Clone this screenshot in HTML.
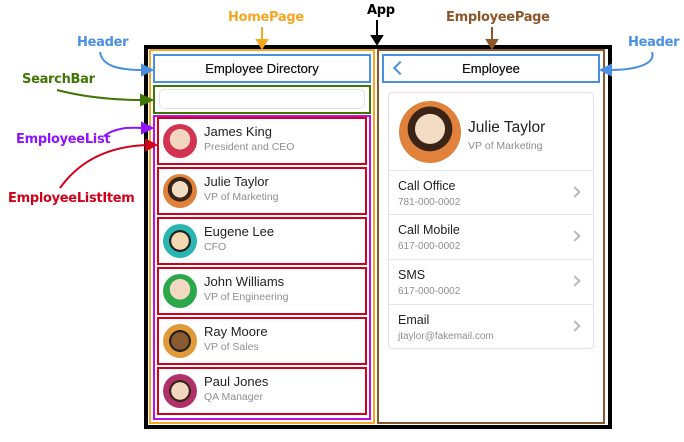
<!DOCTYPE html>
<html><head><meta charset="utf-8"><style>
*{margin:0;padding:0;box-sizing:border-box}
body{width:684px;height:442px;background:#fff;position:relative;overflow:hidden;font-family:"Liberation Sans",sans-serif}
.a{position:absolute}
.lbl{position:absolute;font-family:"DejaVu Sans","Liberation Sans",sans-serif;font-weight:bold;font-size:13px;letter-spacing:-0.3px;white-space:nowrap}
.item{position:absolute;left:157px;width:210px;height:48px;border:2px solid #d0021b;background:#fff}
.av{position:absolute;left:4px;top:5px;width:34px;height:34px;border-radius:50%}
.nm{position:absolute;left:45px;top:5px;font-size:13px;color:#222}
.ti{position:absolute;left:45px;top:22px;font-size:10.5px;color:#8e8e93}
.row{position:absolute;left:0;width:204px;height:44px;border-top:1px solid #e6e6e6}
.row .t{position:absolute;left:9px;top:8px;font-size:12.5px;color:#222}
.row .s{position:absolute;left:9px;top:26px;font-size:10px;color:#8e8e93}
.row .c{position:absolute;right:14px;top:17px;width:8px;height:8px;border-right:2px solid #b8b8b8;border-top:2px solid #b8b8b8;transform:rotate(45deg)}
.hd{text-align:center;line-height:25px;font-size:13px;color:#111;font-weight:bold;-webkit-text-stroke:0}
</style></head><body>
<div class="a" style="left:144px;top:45px;width:468px;height:384px;border:4px solid #000"></div>
<div class="a" style="left:149px;top:49px;width:226px;height:375px;border:2px solid #f5a623"></div>
<div class="a" style="left:377px;top:49px;width:228px;height:375px;border:2px solid #8b572a"></div>
<div class="a hd" style="left:153px;top:54px;width:218px;height:29px;border:2px solid #4a90e2;font-weight:normal;text-shadow:0 0 0.4px #111">Employee Directory</div>
<div class="a" style="left:153px;top:85px;width:218px;height:29px;border:2px solid #417505"></div>
<div class="a" style="left:159px;top:89px;width:206px;height:20px;border:1px solid #e2e2e2;border-radius:5px"></div>
<div class="a" style="left:153px;top:115px;width:218px;height:305px;border:2px solid #bd10e0"></div>
<div class="item" style="top:117px"><div class="av" style="background:radial-gradient(circle at 50% 45%,#f2d6c0 0 40%,#d23350 41%)"></div><div class="nm">James King</div><div class="ti">President and CEO</div></div>
<div class="item" style="top:167px"><div class="av" style="background:radial-gradient(circle at 50% 45%,#f3dcc4 0 32%,#3a2418 33% 48%,#e0823c 49%)"></div><div class="nm">Julie Taylor</div><div class="ti">VP of Marketing</div></div>
<div class="item" style="top:217px"><div class="av" style="background:radial-gradient(circle at 50% 50%,#f1dab0 0 36%,#222 37% 45%,#2bb5b0 46%)"></div><div class="nm">Eugene Lee</div><div class="ti">CFO</div></div>
<div class="item" style="top:267px"><div class="av" style="background:radial-gradient(circle at 50% 45%,#f2d8c0 0 40%,#2aa84a 41%)"></div><div class="nm">John Williams</div><div class="ti">VP of Engineering</div></div>
<div class="item" style="top:317px"><div class="av" style="background:radial-gradient(circle at 50% 50%,#8a5a30 0 36%,#222 37% 45%,#e09a3a 46%)"></div><div class="nm">Ray Moore</div><div class="ti">VP of Sales</div></div>
<div class="item" style="top:367px"><div class="av" style="background:radial-gradient(circle at 50% 50%,#f2d6c0 0 36%,#3a2418 37% 45%,#b0306a 46%)"></div><div class="nm">Paul Jones</div><div class="ti">QA Manager</div></div>
<div class="a hd" style="left:382px;top:54px;width:218px;height:29px;border:2px solid #4a90e2;font-weight:normal;text-shadow:0 0 0.4px #111">Employee</div>
<div class="a" style="left:395px;top:63px;width:10px;height:10px;border-left:2px solid #4a90e2;border-bottom:2px solid #4a90e2;transform:rotate(45deg)"></div>
<div class="a" style="left:388px;top:92px;width:206px;height:257px;border:1px solid #e4e4e4;border-radius:4px;background:#fff">
 <div class="a" style="left:10px;top:8px;width:62px;height:62px;border-radius:50%;background:radial-gradient(circle at 50% 45%,#f3dcc4 0 32%,#3a2418 33% 48%,#e0823c 49%)"></div>
 <div class="a" style="left:79px;top:26px;font-size:15.5px;color:#222">Julie Taylor</div>
 <div class="a" style="left:79px;top:47px;font-size:10.5px;color:#8e8e93">VP of Marketing</div>
 <div class="row" style="top:77px"><div class="t">Call Office</div><div class="s">781-000-0002</div><div class="c"></div></div>
 <div class="row" style="top:121px"><div class="t">Call Mobile</div><div class="s">617-000-0002</div><div class="c"></div></div>
 <div class="row" style="top:166px"><div class="t">SMS</div><div class="s">617-000-0002</div><div class="c"></div></div>
 <div class="row" style="top:211px"><div class="t">Email</div><div class="s">jtaylor@fakemail.com</div><div class="c"></div></div>
</div>
<div class="lbl" style="left:367px;top:3px;color:#000">App</div>
<div class="lbl" style="left:228px;top:10px;color:#f5a623">HomePage</div>
<div class="lbl" style="left:446px;top:10px;color:#8b572a">EmployeePage</div>
<div class="lbl" style="left:77px;top:35px;color:#4a90e2">Header</div>
<div class="lbl" style="left:628px;top:35px;color:#4a90e2">Header</div>
<div class="lbl" style="left:22px;top:72px;color:#417505">SearchBar</div>
<div class="lbl" style="left:16px;top:132px;color:#9013fe">EmployeeList</div>
<div class="lbl" style="left:8px;top:191px;color:#d0021b">EmployeeListItem</div>
<svg class="a" style="left:0;top:0" width="684" height="442">
<g fill="none" stroke-width="2">
<path d="M377 20 V40" stroke="#000"/><path d="M372 36 L377 44 L382 36Z" fill="#000" stroke="#000"/>
<path d="M262 27 V42" stroke="#f5a623"/><path d="M257 40 L262 48 L267 40Z" fill="#f5a623" stroke="#f5a623"/>
<path d="M492 27 V42" stroke="#8b572a"/><path d="M487 40 L492 48 L497 40Z" fill="#8b572a" stroke="#8b572a"/>
<path d="M100 52 C102 66 118 70 144 70" stroke="#4a90e2"/><path d="M142 65 L152 70 L142 75Z" fill="#4a90e2" stroke="#4a90e2"/>
<path d="M652 52 C656 64 636 70 610 70" stroke="#4a90e2"/><path d="M611 65 L601 70 L611 75Z" fill="#4a90e2" stroke="#4a90e2"/>
<path d="M57 90 C80 96 110 100 143 100" stroke="#417505"/><path d="M141 95 L152 100 L141 105Z" fill="#417505" stroke="#417505"/>
<path d="M104 136 C115 128 128 127 144 128" stroke="#9013fe"/><path d="M142 123 L152 128 L142 133Z" fill="#9013fe" stroke="#9013fe"/>
<path d="M60 188 C80 160 110 146 148 145" stroke="#d0021b"/><path d="M146 140 L156 145 L146 150Z" fill="#d0021b" stroke="#d0021b"/>
</g></svg>
</body></html>
